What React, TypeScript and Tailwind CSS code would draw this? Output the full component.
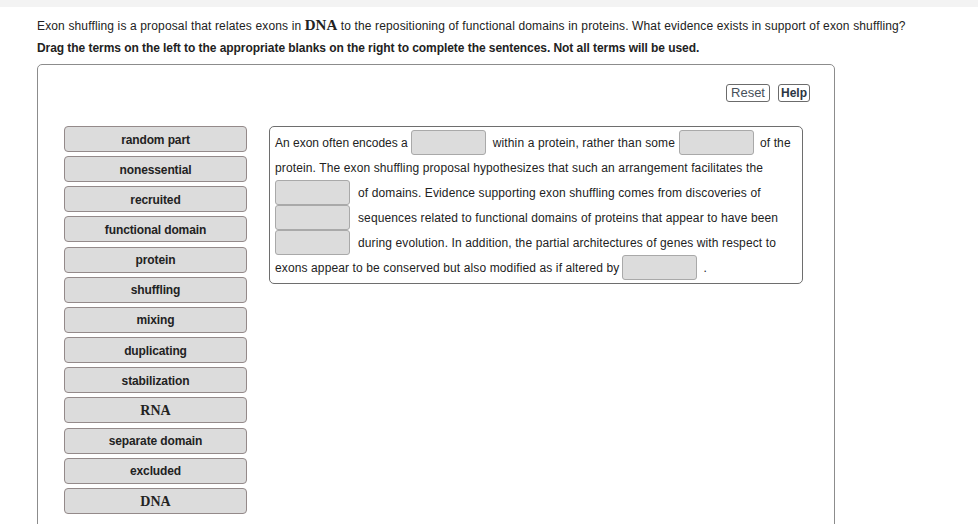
import React from 'react';

const terms: { label: string; serif?: boolean }[] = [
  { label: 'random part' },
  { label: 'nonessential' },
  { label: 'recruited' },
  { label: 'functional domain' },
  { label: 'protein' },
  { label: 'shuffling' },
  { label: 'mixing' },
  { label: 'duplicating' },
  { label: 'stabilization' },
  { label: 'RNA', serif: true },
  { label: 'separate domain' },
  { label: 'excluded' },
  { label: 'DNA', serif: true },
];

const Blank: React.FC<{ className?: string }> = ({ className = '' }) => (
  <span className={`inline-block w-[75px] h-[25px] shrink-0 bg-[#dcdcdc] border border-[#a9a9a9] rounded-[3px] ${className}`} />
);

const App: React.FC = () => {
  return (
    <div className="w-[978px] h-[524px] overflow-hidden bg-white text-[#222] font-['Liberation_Sans',Arial,sans-serif]">
      <div className="h-[7px] bg-[#f3f3f3]" />
      <div className="pl-[37px] pt-[9px]">
        <p className="h-[18px] leading-[18px] text-[12px] tracking-[0.14px] whitespace-nowrap">
          Exon shuffling is a proposal that relates exons in{' '}
          <span className="font-['Liberation_Serif',serif] font-bold text-[15px] tracking-normal">DNA</span> to the repositioning of functional domains in proteins. What evidence exists in support of exon shuffling?
        </p>
        <p className="mt-[5px] h-[18px] leading-[18px] text-[12px] font-bold tracking-[-0.06px] whitespace-nowrap">
          Drag the terms on the left to the appropriate blanks on the right to complete the sentences. Not all terms will be used.
        </p>

        <div className="mt-[7px] w-[798px] h-[600px] border border-[#8c8c8c] rounded-[5px] pt-[19px] pl-[26px] pr-[24px]">
          <div className="flex justify-end gap-[8px]">
            <button className="h-[18px] px-[4px] leading-[16px] text-[13px] text-[#46505a] border border-[#6b6b6b] rounded-[3px] bg-white">
              Reset
            </button>
            <button className="h-[18px] px-[2px] leading-[16px] text-[12px] font-bold text-[#2b3644] border border-[#6b6b6b] rounded-[3px] bg-white">
              Help
            </button>
          </div>

          <div className="mt-[24px] flex items-start gap-[22px]">
            <div className="w-[183px] flex flex-col gap-[4.17px]">
              {terms.map((t) => (
                <div
                  key={t.label}
                  className={`h-[26px] pt-[1px] flex items-center justify-center bg-[#dcdcdc] border border-[#948a8a] rounded-[4px] font-bold ${
                    t.serif ? "font-['Liberation_Serif',serif] text-[14px]" : 'text-[12px] tracking-[-0.12px]'
                  }`}
                >
                  {t.label}
                </div>
              ))}
            </div>

            <div className="w-[534px] border border-[#6e6e6e] rounded-[5px] pt-[3px] pb-[3px] pl-[5px] text-[12px] tracking-[0.12px] whitespace-nowrap">
              <div className="h-[25px] flex items-center">
                <span className="tracking-normal">An exon often encodes a</span>
                <Blank className="ml-[3px]" />
                <span className="ml-[7px]">within a protein, rather than some</span>
                <Blank className="ml-[4px]" />
                <span className="ml-[6px]">of the</span>
              </div>
              <div className="h-[25px] flex items-center">
                <span>protein. The exon shuffling proposal hypothesizes that such an arrangement facilitates the</span>
              </div>
              <div className="h-[25px] flex items-center">
                <Blank />
                <span className="ml-[8px]">of domains. Evidence supporting exon shuffling comes from discoveries of</span>
              </div>
              <div className="h-[25px] flex items-center">
                <Blank />
                <span className="ml-[8px]">sequences related to functional domains of proteins that appear to have been</span>
              </div>
              <div className="h-[25px] flex items-center">
                <Blank />
                <span className="ml-[8px]">during evolution. In addition, the partial architectures of genes with respect to</span>
              </div>
              <div className="h-[25px] flex items-center">
                <span>exons appear to be conserved but also modified as if altered by</span>
                <Blank className="ml-[3px]" />
                <span className="ml-[6px]">.</span>
              </div>
            </div>
          </div>
        </div>
      </div>
    </div>
  );
};

export default App;
